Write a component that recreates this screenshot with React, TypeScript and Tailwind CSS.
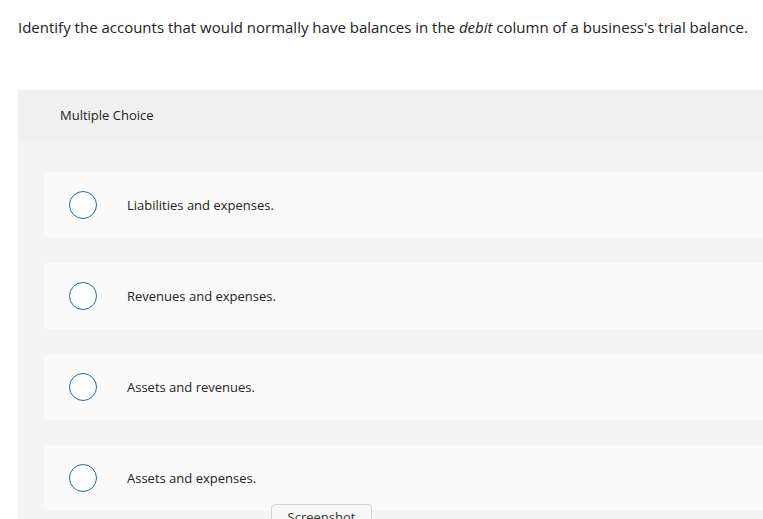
const options = [
  'Liabilities and expenses.',
  'Revenues and expenses.',
  'Assets and revenues.',
  'Assets and expenses.',
]

export default function App() {
  return (
    <div
      className="relative w-[763px] h-[519px] overflow-hidden bg-white text-[#222]"
      style={{ fontFamily: '"Open Sans", Lato, sans-serif' }}
    >
      <p className="pt-[17px] pl-[18px] text-[15px] leading-5 whitespace-nowrap">
        Identify the accounts that would normally have balances in the <i>debit</i> column of a
        business's trial balance.
      </p>

      <div className="mt-[53px] ml-[18px] w-[760px] rounded-tl-[3px] bg-[#f4f4f4]">
        <div className="h-[50px] flex items-center pl-[42px] pt-[2px] bg-[#f0f0f0] text-[13px]">
          Multiple Choice
        </div>
        <div className="pt-[32px] pl-[26px] flex flex-col gap-[25px] pb-6">
          {options.map((o) => (
            <div
              key={o}
              className="h-[66px] flex items-center pl-[25px] rounded-l-[3px] bg-[#fafafa]"
            >
              <span className="w-[28px] h-[28px] shrink-0 rounded-full border-[1.5px] border-[#1f6aa8] bg-white" />
              <span className="ml-[30px] text-[13px] pt-px">{o}</span>
            </div>
          ))}
        </div>
      </div>

      <div className="absolute left-[271px] top-[504px] w-[101px] h-[26px] rounded-[4px] border border-[#d4d4d4] bg-[#f7f7f7] flex justify-center pt-[4px] text-[13px] leading-4 text-[#333]">
        Screenshot
      </div>
    </div>
  )
}
